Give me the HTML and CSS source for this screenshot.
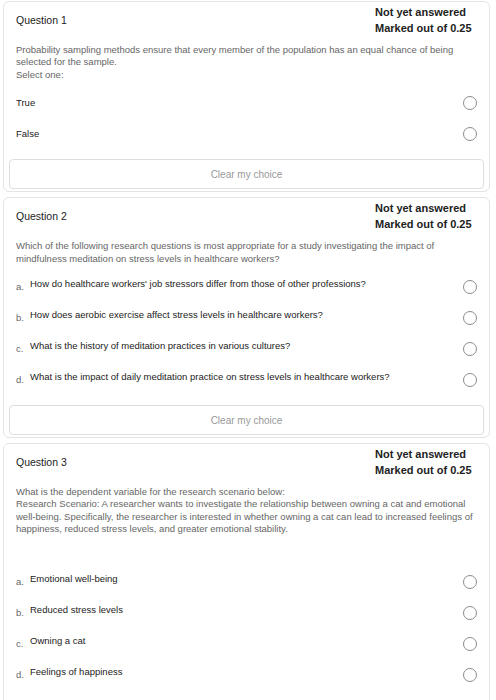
FILE: index.html
```html
<!DOCTYPE html>
<html>
  <head>
    <meta charset="UTF-8">
    <title>Quiz</title>
    <link rel="stylesheet" href="styles.css">
  </head>
  <body>
    <div class="que">
      <div class="que-head">
        <h3 class="que-no">Question 1</h3>
        <div class="que-info">
          <div>Not yet answered</div>
          <div>Marked out of 0.25</div>
        </div>
      </div>
      <div class="que-text">
        Probability sampling methods ensure that every member of the population has an equal chance of being selected for the sample.<br>
        Select one:
      </div>
      <div class="answer">
        <label class="opt">
          <span class="opt-text">True</span>
          <span class="radio"></span>
        </label>
        <label class="opt">
          <span class="opt-text">False</span>
          <span class="radio"></span>
        </label>
      </div>
      <button class="clear">Clear my choice</button>
    </div>

    <div class="que">
      <div class="que-head">
        <h3 class="que-no">Question 2</h3>
        <div class="que-info">
          <div>Not yet answered</div>
          <div>Marked out of 0.25</div>
        </div>
      </div>
      <div class="que-text">
        Which of the following research questions is most appropriate for a study investigating the impact of mindfulness meditation on stress levels in healthcare workers?
      </div>
      <div class="answer">
        <label class="opt">
          <span class="num">a.</span>
          <span class="opt-text raised">How do healthcare workers' job stressors differ from those of other professions?</span>
          <span class="radio"></span>
        </label>
        <label class="opt">
          <span class="num">b.</span>
          <span class="opt-text raised">How does aerobic exercise affect stress levels in healthcare workers?</span>
          <span class="radio"></span>
        </label>
        <label class="opt">
          <span class="num">c.</span>
          <span class="opt-text raised">What is the history of meditation practices in various cultures?</span>
          <span class="radio"></span>
        </label>
        <label class="opt">
          <span class="num">d.</span>
          <span class="opt-text raised">What is the impact of daily meditation practice on stress levels in healthcare workers?</span>
          <span class="radio"></span>
        </label>
      </div>
      <button class="clear">Clear my choice</button>
    </div>

    <div class="que que-last">
      <div class="que-head">
        <h3 class="que-no">Question 3</h3>
        <div class="que-info">
          <div>Not yet answered</div>
          <div>Marked out of 0.25</div>
        </div>
      </div>
      <div class="que-text">
        What is the dependent variable for the research scenario below:<br>
        Research Scenario: A researcher wants to investigate the relationship between owning a cat and emotional well-being. Specifically, the researcher is interested in whether owning a cat can lead to increased feelings of happiness, reduced stress levels, and greater emotional stability.<br>
        <br>
        <br>
      </div>
      <div class="answer">
        <label class="opt">
          <span class="num">a.</span>
          <span class="opt-text raised">Emotional well-being</span>
          <span class="radio"></span>
        </label>
        <label class="opt">
          <span class="num">b.</span>
          <span class="opt-text raised">Reduced stress levels</span>
          <span class="radio"></span>
        </label>
        <label class="opt">
          <span class="num">c.</span>
          <span class="opt-text raised">Owning a cat</span>
          <span class="radio"></span>
        </label>
        <label class="opt">
          <span class="num">d.</span>
          <span class="opt-text raised">Feelings of happiness</span>
          <span class="radio"></span>
        </label>
      </div>
    </div>
  </body>
</html>
```

FILE: styles.css
```css
body{
    margin: 0;
    padding: 1px 6px 0 3px;
    background: #fff;
    font-family: "Liberation Sans", Arial, sans-serif;
    color: #222;
}
.que{
    border: 1px solid #e4e4e4;
    border-radius: 6px;
    padding: 2px 12px 2px 12px;
    margin-bottom: 5px;
}
.que-last{
    padding-bottom: 20px;
}
.que-head{
    display: flex;
    align-items: center;
    height: 32px;
}
.que-no{
    margin: 0;
    font-size: 10.5px;
    font-weight: normal;
    color: #1c1c1c;
}
.que-info{
    margin-left: auto;
    width: 102px;
    font-size: 11px;
    line-height: 16px;
    font-weight: bold;
    color: #222;
}
.que-text{
    margin-top: 8px;
    font-size: 9.5px;
    line-height: 12.4px;
    color: #666;
}
.answer{
    margin-top: 6px;
}
.opt{
    display: flex;
    align-items: center;
    height: 31px;
    font-size: 9.5px;
}
.num{
    width: 14px;
    color: #666;
    flex: none;
}
.opt-text{
    flex: 1;
    color: #222;
}
.raised{
    margin-bottom: 7px;
}
.radio{
    width: 12px;
    height: 12px;
    border: 1px solid #8c8c8c;
    border-radius: 50%;
    flex: none;
}
.clear{
    display: block;
    width: calc(100% + 14px);
    margin: 10px -7px 0 -7px;
    height: 30px;
    background: #fff;
    border: 1px solid #dedede;
    border-radius: 4px;
    font-family: inherit;
    font-size: 10px;
    color: #999;
}
```
